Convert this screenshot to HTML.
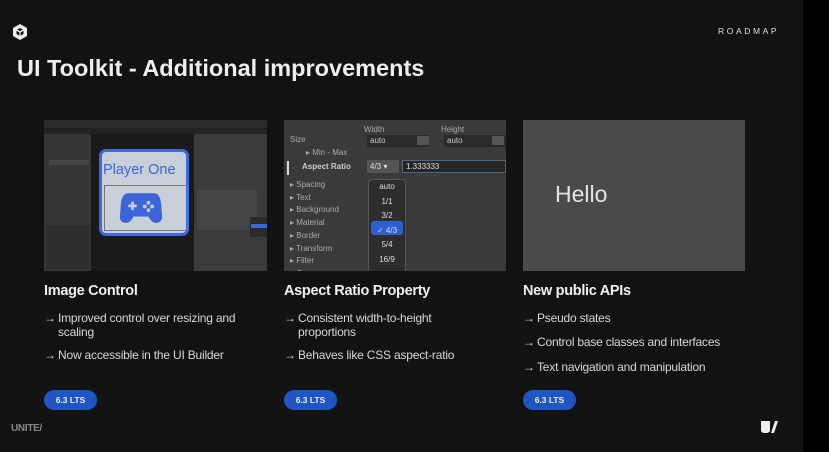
<!DOCTYPE html>
<html><head><style>
*{margin:0;padding:0;box-sizing:border-box}
body{width:829px;height:452px;background:#121212;font-family:"Liberation Sans",sans-serif;color:#eee;position:relative;overflow:hidden}
.a{position:absolute}
.h{font-size:14.5px;font-weight:bold;color:#f0f0f0;letter-spacing:-0.3px}
.b{font-size:12px;color:#d8d8d8;line-height:14px;letter-spacing:-0.2px}
.b span{position:absolute;left:0}
.pill{width:53px;height:20px;border-radius:10px;background:#1f55c0;color:#e8eefc;font-size:8.5px;font-weight:bold;text-align:center;line-height:20px}
.row{position:absolute;left:0;width:222px;height:1px;background:#3a3a3a}
.lbl{font-size:8px;color:#aaa}
</style></head><body>
<div class="a" style="left:803px;top:0;width:26px;height:452px;background:#000"></div>
<svg class="a" style="left:11px;top:23px" width="18" height="18" viewBox="0 0 18 18"><path d="M9 1 L16 5 V13 L9 17 L2 13 V5Z" fill="#eee"/><path d="M9 5 L12.5 7 V11 L9 13 L5.5 11 V7Z" fill="#121212"/><path d="M9 9 L9 13 M9 9 L5.5 7 M9 9 L12.5 7" stroke="#eee" stroke-width="1.3"/></svg>
<div class="a" style="left:718px;top:26px;font-size:8.5px;letter-spacing:2.6px;color:#ddd">ROADMAP</div>
<div class="a" style="left:17px;top:55px;font-size:23.5px;font-weight:bold;color:#eee;letter-spacing:0">UI Toolkit - Additional improvements</div>

<!-- panel 1 -->
<div class="a" style="left:44px;top:120px;width:223px;height:151px;background:#3b3b3b;overflow:hidden">
 <div class="a" style="left:0;top:0;width:223px;height:8px;background:#2a2a2a"></div>
 <div class="a" style="left:0;top:8px;width:223px;height:6px;background:#222"></div>
 <div class="a" style="left:0;top:14px;width:47px;height:137px;background:#353535"></div>
 <div class="a" style="left:5px;top:40px;width:40px;height:5px;background:#444"></div>
 <div class="a" style="left:47px;top:14px;width:103px;height:137px;background:#1a1a1a"></div>
 <div class="a" style="left:55px;top:29px;width:90px;height:87px;background:#c9cfd9;border:3px solid #3e68e0;border-radius:7px"></div>
 <div class="a" style="left:59px;top:42px;font-size:14.5px;color:#3d65d8">Player One</div>
 <div class="a" style="left:60px;top:65px;width:84px;height:46px;border:1px solid #777"></div>
 <svg class="a" style="left:75px;top:69px" width="44" height="36" viewBox="0 0 40 34"><path d="M8 4 H32 Q38 4 39 14 L40 26 Q40 32 34 32 Q30 32 27 26 H13 Q10 32 6 32 Q0 32 0 26 L1 14 Q2 4 8 4Z" fill="#3d65d8"/><path d="M8 16 H16 M12 12 V20" stroke="#c9cfd9" stroke-width="2.5"/><circle cx="27" cy="13" r="1.8" fill="#c9cfd9"/><circle cx="27" cy="20" r="1.8" fill="#c9cfd9"/><circle cx="23.5" cy="16.5" r="1.8" fill="#c9cfd9"/><circle cx="30.5" cy="16.5" r="1.8" fill="#c9cfd9"/></svg>
 <div class="a" style="left:153px;top:70px;width:60px;height:40px;background:#444"></div>
 <div class="a" style="left:206px;top:97px;width:17px;height:20px;background:#2a2a2a"></div>
 <div class="a" style="left:207px;top:104px;width:16px;height:4px;background:#3a6ad8"></div>
 <div class="a" style="left:3px;top:105px;width:42px;height:44px;background:#2e2e2e"></div>
</div>

<!-- panel 2 -->
<div class="a" style="left:284px;top:120px;width:222px;height:151px;background:#3a3a3a;overflow:hidden">
 <div class="a lbl" style="left:80px;top:5px">Width</div>
 <div class="a lbl" style="left:157px;top:5px">Height</div>
 <div class="a lbl" style="left:6px;top:15px">Size</div>
 <div class="a" style="left:83px;top:15px;width:62px;height:12px;background:#2a2a2a;font-size:8px;color:#ccc;padding:1px 3px">auto</div>
 <div class="a" style="left:133px;top:16px;width:12px;height:9px;background:#555"></div>
 <div class="a" style="left:160px;top:15px;width:62px;height:12px;background:#2a2a2a;font-size:8px;color:#ccc;padding:1px 3px">auto</div>
 <div class="a" style="left:208px;top:16px;width:12px;height:9px;background:#555"></div>
 <div class="a lbl" style="left:22px;top:28px">▸ Min - Max</div>
 <div class="a" style="left:3px;top:41px;width:2px;height:14px;background:#ddd"></div>
 <div class="a lbl" style="left:18px;top:42px;font-weight:bold;color:#ccc">Aspect Ratio</div>
 <div class="a" style="left:83px;top:40px;width:32px;height:13px;background:#555;font-size:8px;color:#ddd;padding:2px 3px">4/3 ▾</div>
 <div class="a" style="left:118px;top:40px;width:104px;height:13px;background:#262626;border:1px solid #567;font-size:8px;color:#ddd;padding:1px 3px">1.333333</div>
 <div class="row" style="top:57px"></div><div class="row" style="top:70px"></div><div class="row" style="top:83px"></div><div class="row" style="top:96px"></div><div class="row" style="top:109px"></div><div class="row" style="top:122px"></div><div class="row" style="top:135px"></div><div class="row" style="top:148px"></div>
 <div class="a lbl" style="left:6px;top:59px;line-height:12.7px">▸ Spacing<br>▸ Text<br>▸ Background<br>▸ Material<br>▸ Border<br>▸ Transform<br>▸ Filter<br>▸ Cursor</div>
 <div class="a" style="left:84px;top:59px;width:38px;height:94px;background:#2d2d2d;border:1px solid #555;border-radius:4px"></div>
 <div class="a" style="left:87px;top:101px;width:32px;height:14px;background:#2d5fd0;border-radius:3px"></div>
 <div class="a" style="left:86px;top:60px;width:34px;font-size:8px;color:#ddd;text-align:center;line-height:14.5px">auto<br>1/1<br>3/2<br>✓ 4/3<br>5/4<br>16/9</div>
</div>

<!-- panel 3 -->
<div class="a" style="left:523px;top:120px;width:222px;height:151px;background:#4a4b49"></div>
<div class="a" style="left:555px;top:181px;font-size:23px;color:#e4e4e4">Hello</div>

<!-- text -->
<div class="a h" style="left:44px;top:283px">Image Control</div>
<div class="a b" style="left:44px;top:311px;width:215px;padding-left:14px"><span>→</span>Improved control over resizing and scaling</div>
<div class="a b" style="left:44px;top:348px;width:220px;padding-left:14px"><span>→</span>Now accessible in the UI Builder</div>

<div class="a h" style="left:284px;top:283px">Aspect Ratio Property</div>
<div class="a b" style="left:284px;top:311px;width:175px;padding-left:14px"><span>→</span>Consistent width-to-height proportions</div>
<div class="a b" style="left:284px;top:348px;width:220px;padding-left:14px"><span>→</span>Behaves like CSS aspect-ratio</div>

<div class="a h" style="left:523px;top:283px">New public APIs</div>
<div class="a b" style="left:523px;top:311px;width:260px;padding-left:14px"><span>→</span>Pseudo states</div>
<div class="a b" style="left:523px;top:335px;width:260px;padding-left:14px"><span>→</span>Control base classes and interfaces</div>
<div class="a b" style="left:523px;top:360px;width:260px;padding-left:14px"><span>→</span>Text navigation and manipulation</div>

<div class="a pill" style="left:44px;top:390px">6.3 LTS</div>
<div class="a pill" style="left:284px;top:390px">6.3 LTS</div>
<div class="a pill" style="left:523px;top:390px">6.3 LTS</div>

<div class="a" style="left:11px;top:423px;font-size:10px;font-weight:bold;color:#888;letter-spacing:-0.3px">UNITE/</div>
<svg class="a" style="left:761px;top:421px" width="18" height="13" viewBox="0 0 18 13"><path d="M0 0 H9 V9 Q9 12 5 12 H4 Q0 12 0 9Z" fill="#eee"/><path d="M14 0 H17 L13 12 H10Z" fill="#eee"/></svg>
</body></html>
